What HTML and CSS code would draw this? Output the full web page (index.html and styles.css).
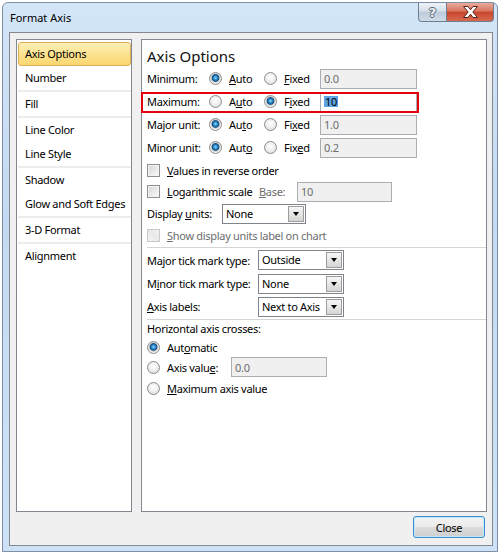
FILE: index.html
```html
<!DOCTYPE html>
<html lang="en">
<head>
    <meta charset="UTF-8">
    <meta name="viewport" content="width=device-width, initial-scale=1.0">
    <title>Format Axis</title>
    <link rel="stylesheet" href="styles.css">
</head>
<body>

<div class="window">
    <div class="titlebar">
        <span class="caption">Format Axis</span>
        <div class="caption-btns">
            <div class="cap-btn help">?</div>
            <div class="cap-btn close-x">
                <svg width="17" height="12" viewBox="0 0 17 12">
                    <path d="M1.5 0.5 H6 L8.5 3.8 L11 0.5 H15.5 L10.8 6 L15.5 11.5 H11 L8.5 8.2 L6 11.5 H1.5 L6.2 6 Z" fill="#fff" stroke="#5b2118" stroke-width="1"/>
                </svg>
            </div>
        </div>
    </div>

    <div class="client">
        <div class="panels">

            <div class="nav">
                <div class="nav-item selected">Axis Options</div>
                <div class="nav-item">Number</div>
                <div class="nav-sep"></div>
                <div class="nav-item">Fill</div>
                <div class="nav-sep"></div>
                <div class="nav-item">Line Color</div>
                <div class="nav-item">Line Style</div>
                <div class="nav-sep"></div>
                <div class="nav-item">Shadow</div>
                <div class="nav-item">Glow and Soft Edges</div>
                <div class="nav-sep"></div>
                <div class="nav-item">3-D Format</div>
                <div class="nav-sep"></div>
                <div class="nav-item">Alignment</div>
            </div>

            <div class="options">
                <h1>Axis Options</h1>

                <div class="axis-row">
                    <span>Minimum:</span>
                    <label class="choice"><span class="radio on"></span><span><u>A</u>uto</span></label>
                    <label class="choice"><span class="radio"></span><span><u>F</u>ixed</span></label>
                    <div class="field">0.0</div>
                </div>
                <div class="axis-row highlight">
                    <span>Maximum:</span>
                    <label class="choice"><span class="radio"></span><span>A<u>u</u>to</span></label>
                    <label class="choice"><span class="radio on"></span><span>F<u>i</u>xed</span></label>
                    <div class="field active"><span class="sel">10</span></div>
                </div>
                <div class="axis-row">
                    <span>Major unit:</span>
                    <label class="choice"><span class="radio on"></span><span>Au<u>t</u>o</span></label>
                    <label class="choice"><span class="radio"></span><span>Fi<u>x</u>ed</span></label>
                    <div class="field">1.0</div>
                </div>
                <div class="axis-row">
                    <span>Minor unit:</span>
                    <label class="choice"><span class="radio on"></span><span>Aut<u>o</u></span></label>
                    <label class="choice"><span class="radio"></span><span>Fix<u>e</u>d</span></label>
                    <div class="field">0.2</div>
                </div>

                <div class="check-row first">
                    <span class="check"></span><span><u>V</u>alues in reverse order</span>
                </div>
                <div class="log-row">
                    <div class="check-row"><span class="check"></span><span><u>L</u>ogarithmic scale</span></div>
                    <span class="dim"><u>B</u>ase:</span>
                    <div class="field">10</div>
                </div>
                <div class="units-row">
                    <span>Display <u>u</u>nits:</span>
                    <div class="select"><span>None</span><span class="arrow"></span></div>
                </div>
                <div class="check-row">
                    <span class="check disabled"></span><span class="dim"><u>S</u>how display units label on chart</span>
                </div>

                <div class="sep"></div>

                <div class="tick-row first">
                    <span>Ma<u>j</u>or tick mark type:</span>
                    <div class="select"><span>Outside</span><span class="arrow"></span></div>
                </div>
                <div class="tick-row">
                    <span>M<u>i</u>nor tick mark type:</span>
                    <div class="select"><span>None</span><span class="arrow"></span></div>
                </div>
                <div class="tick-row">
                    <span><u>A</u>xis labels:</span>
                    <div class="select"><span>Next to Axis</span><span class="arrow"></span></div>
                </div>

                <div class="sep"></div>

                <div class="cross-title">Horizontal axis crosses:</div>
                <label class="radio-row auto"><span class="radio on"></span><span>Aut<u>o</u>matic</span></label>
                <div class="value-row">
                    <label class="radio-row"><span class="radio"></span><span>Axis valu<u>e</u>:</span></label>
                    <div class="field">0.0</div>
                </div>
                <label class="radio-row last"><span class="radio"></span><span><u>M</u>aximum axis value</span></label>
            </div>

        </div>

        <div class="footer">
            <button class="btn">Close</button>
        </div>
    </div>
</div>

</body>
</html>
```

FILE: styles.css
```css
body {
    margin: 0;
    background: #ffffff;
    font-family: "Noto Sans", "Liberation Sans", sans-serif;
    font-size: 11px;
    letter-spacing: -0.3px;
    color: #000;
}

/* window frame */
.window {
    margin: 2px 0 0 2px;
    width: 496px;
    height: 550px;
    box-sizing: border-box;
    border: 1px solid #7d8fa4;
    border-radius: 6px 6px 0 0;
    background: linear-gradient(#d3e5f7, #c3daf2 40%, #cde2f6);
    display: flex;
    flex-direction: column;
}

.titlebar {
    height: 29px;
    display: flex;
    justify-content: space-between;
    align-items: flex-start;
    padding: 0 3px 0 7px;
}

.caption {
    line-height: 29px;
    letter-spacing: 0;
}

.caption-btns {
    display: flex;
}

.cap-btn {
    height: 19px;
    box-sizing: border-box;
    border: 1px solid #6e7f92;
    border-top: none;
    display: flex;
    justify-content: center;
    align-items: center;
}

.help {
    width: 28px;
    border-right: none;
    border-radius: 0 0 0 4px;
    background: linear-gradient(#eef3f8, #d6e0ea 45%, #bccbdb 50%, #cfdbe7);
    color: #eef1f4;
    font-family: "DejaVu Sans", sans-serif;
    font-weight: bold;
    font-size: 13px;
    line-height: 17px;
    letter-spacing: 0;
    text-shadow: 1px 0 0 #5a6673, -1px 0 0 #5a6673, 0 1px 0 #5a6673, 0 -1px 0 #5a6673;
}

.close-x {
    width: 48px;
    border-radius: 0 0 4px 0;
    background: linear-gradient(#e9ab9d, #d8775f 45%, #c8452c 50%, #d66a50);
}

/* dialog body */
.client {
    height: 514px;
    box-sizing: border-box;
    margin: 0 4px 0 6px;
    border: 1px solid #828790;
    background: #f0f0f0;
    padding: 6px 5px 0 6px;
    display: flex;
    flex-direction: column;
}

.panels {
    display: flex;
    gap: 9px;
    height: 473px;
}

.nav {
    width: 116px;
    box-sizing: border-box;
    border: 1px solid #828790;
    background: #fff;
    padding: 2px 0 0 1px;
}

.nav-item {
    height: 24px;
    box-sizing: border-box;
    border: 1px solid transparent;
    padding-left: 6px;
    line-height: 22px;
    white-space: nowrap;
}

.nav-item.selected {
    border-color: #dcae55;
    border-radius: 3px;
    background: linear-gradient(#fdefb6, #fce391 50%, #fbd66e);
}

.nav-sep {
    height: 2px;
    background: #ececec;
}

.options {
    flex: 1;
    border: 1px solid #828790;
    background: #fff;
    padding: 6px 0 0 5px;
}

.options h1 {
    margin: 0;
    font-size: 15px;
    font-weight: normal;
    line-height: 21px;
    height: 21px;
    letter-spacing: 0;
    color: #111;
}

.axis-row {
    position: relative;
    display: grid;
    grid-template-columns: 62px 55px 56px 97px;
    height: 23px;
    align-items: center;
}

/* red frame around the maximum row */
.axis-row.highlight::after {
    content: "";
    position: absolute;
    left: -6px;
    top: 2px;
    width: 278px;
    height: 21px;
    box-sizing: border-box;
    border: 2px solid #e5000e;
}

.choice {
    display: flex;
    align-items: center;
    gap: 7px;
}

.radio {
    flex: none;
    width: 13px;
    height: 13px;
    box-sizing: border-box;
    border-radius: 50%;
    border: 1px solid #8c8c8c;
    background: radial-gradient(circle at 50% 40%, #ffffff, #ececec 55%, #d2d2d2);
}

.radio.on {
    background: radial-gradient(circle at 50% 45%, #9bdcfa 0, #2d8ed2 1.8px, #16507f 3.4px, #c9c9c9 4.2px, #f4f4f4 5.5px);
}

.check {
    flex: none;
    width: 13px;
    height: 13px;
    box-sizing: border-box;
    border: 1px solid #8e8f8f;
    background: linear-gradient(135deg, #d6d6d6, #fafafa);
    box-shadow: inset 0 0 0 1px #f4f4f4;
}

.check.disabled {
    border-color: #c9c9c9;
    background: repeating-linear-gradient(45deg, #f4f4f4 0 1px, #e4e4e4 1px 2px);
    box-shadow: none;
}

.field {
    height: 20px;
    box-sizing: border-box;
    border: 1px solid #abadb3;
    background: #f0f0f0;
    color: #6d6d6d;
    padding-left: 3px;
    display: flex;
    align-items: center;
}

.field.active {
    background: #fff;
    color: #000;
}

.sel {
    background: #5ea3e4;
    line-height: 11px;
    padding: 0 1px;
}

.dim {
    color: #6d6d6d;
}

.check-row {
    display: flex;
    align-items: center;
    gap: 7px;
    height: 21px;
}

.check-row.first {
    height: 22px;
}

.log-row {
    display: grid;
    grid-template-columns: 112px 38px 95px;
    height: 21px;
    align-items: center;
}

.units-row {
    display: grid;
    grid-template-columns: 75px 84px;
    height: 23px;
    align-items: center;
}

.tick-row {
    display: grid;
    grid-template-columns: 111px 86px;
    height: 23px;
    align-items: center;
}

.tick-row.first {
    height: 24px;
}

.select {
    height: 20px;
    box-sizing: border-box;
    border: 1px solid #7f848c;
    background: #fff;
    padding: 1px;
    display: flex;
}

.select span:first-child {
    flex: 1;
    padding-left: 2px;
    line-height: 16px;
    white-space: nowrap;
    overflow: hidden;
}

.arrow {
    width: 16px;
    box-sizing: border-box;
    border: 1px solid #9c9c9c;
    background: linear-gradient(#f6f6f6, #e6e6e6 50%, #d5d5d5);
    display: flex;
    justify-content: center;
    align-items: center;
}

.arrow::before {
    content: "";
    border-left: 3.5px solid transparent;
    border-right: 3.5px solid transparent;
    border-top: 4px solid #000;
}

.sep {
    height: 1px;
    margin-top: 1px;
    background: #d5d5d5;
}

.cross-title {
    height: 18px;
    line-height: 18px;
}

.radio-row {
    display: flex;
    align-items: center;
    gap: 7px;
    height: 18px;
}

.value-row {
    display: grid;
    grid-template-columns: 84px 96px;
    height: 22px;
    align-items: center;
}

.radio-row.last {
    height: 20px;
}

.footer {
    display: flex;
    justify-content: flex-end;
    margin-top: 4px;
    padding-right: 2px;
}

.btn {
    width: 72px;
    height: 22px;
    border: 1px solid #3c8ccc;
    border-radius: 3px;
    background: linear-gradient(#f3f3f3, #ebebeb 48%, #dcdcdc 52%, #cfcfcf);
    box-shadow: inset 0 0 0 1px #bfeafb;
    font-family: inherit;
    font-size: 11px;
    letter-spacing: -0.3px;
    color: #000;
    padding: 0;
}
```
